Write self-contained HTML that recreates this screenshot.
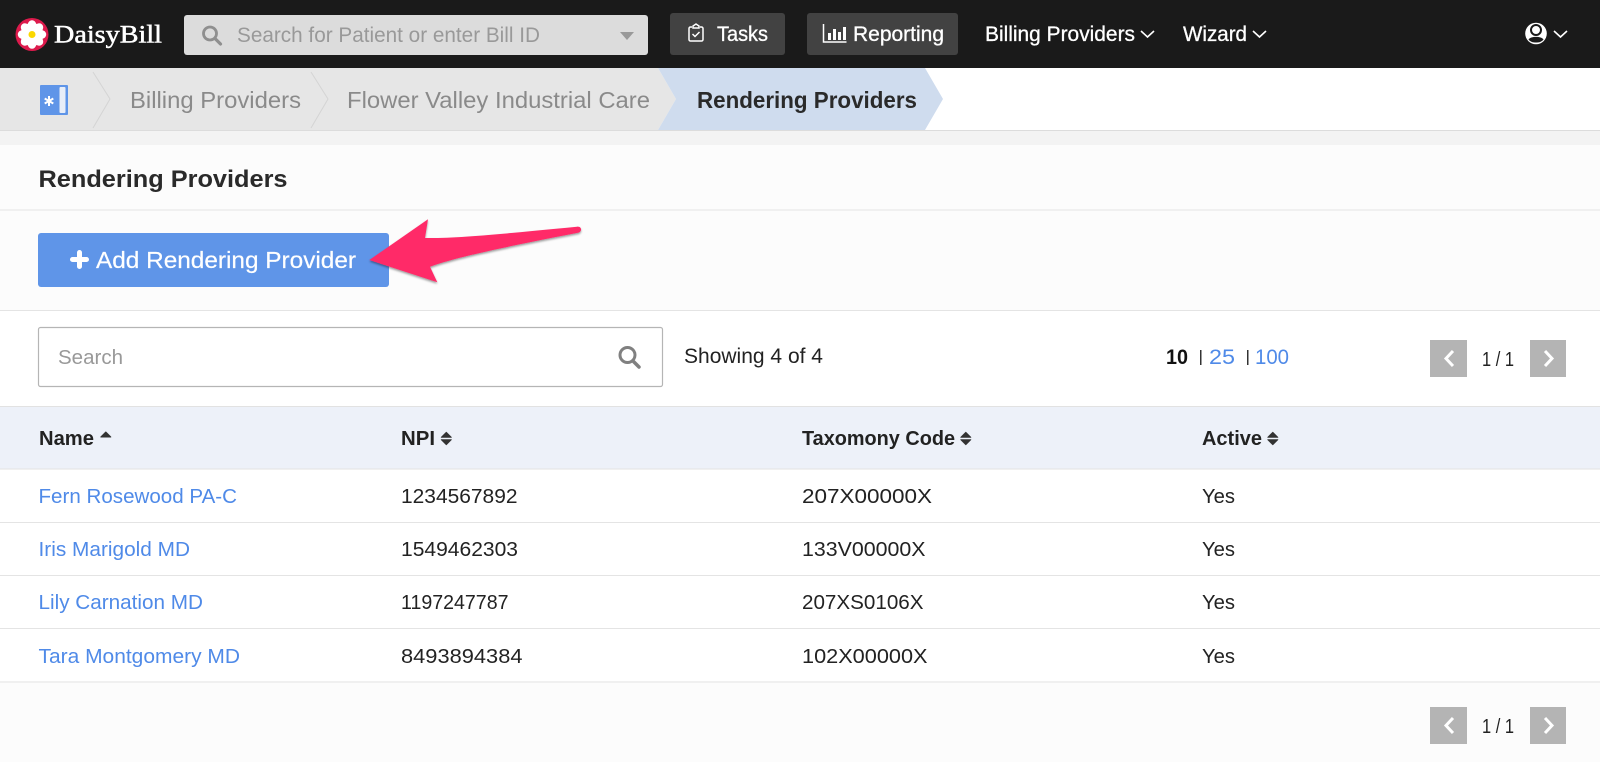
<!DOCTYPE html>
<html><head><meta charset="utf-8"><title>Rendering Providers</title>
<style>
html,body{margin:0;padding:0;width:1600px;height:762px;overflow:hidden;background:#fcfcfc}
svg{display:block}
text{font-family:"Liberation Sans",sans-serif;font-size:20.5px;fill:#222}
.w{fill:#fff}.l{fill:#4f8ae8}.g{fill:#8a8a8a}.b{font-weight:bold}
.n{font-size:21px;stroke:#fff;stroke-width:.3}
.c{font-size:23px}
.s{fill:none;stroke:#fff;stroke-width:1.6}
</style></head><body>
<svg width="1600" height="762" viewBox="0 0 1600 762" xmlns="http://www.w3.org/2000/svg">
<defs>
<filter id="sh" x="-10%" y="-20%" width="120%" height="150%"><feDropShadow dx="0" dy="1.500" stdDeviation="1" flood-color="#000" flood-opacity=".4"/></filter>
<g id="sort"><path d="M.8 5.800 L5.800 .8 L10.800 5.800Z M.8 8.200 L5.800 13.200 L10.800 8.200Z" fill="#333" stroke="#333" stroke-linejoin="round"/></g>
<g id="pg">
<rect x="1430" width="37" height="37" fill="#b4b4b4"/><path d="M1453 11l-7 7.500 7 7.500" fill="none" stroke="#fff" stroke-width="3"/>
<rect x="1530" width="36" height="37" fill="#b4b4b4"/><path d="M1545 11l7 7.500-7 7.500" fill="none" stroke="#fff" stroke-width="3"/>
</g>
</defs>

<rect width="1600" height="762" fill="#fcfcfc"/>
<!-- top nav -->
<rect width="1600" height="68" fill="#1a1a1a"/>
<circle cx="32" cy="34.500" r="16.500" fill="#dd1a4c"/>
<g fill="#fff" transform="translate(32 34.500)">
<ellipse cy="-8.200" rx="4.700" ry="6"/><ellipse cy="-8.200" rx="4.700" ry="6" transform="rotate(45)"/><ellipse cy="-8.200" rx="4.700" ry="6" transform="rotate(90)"/><ellipse cy="-8.200" rx="4.700" ry="6" transform="rotate(135)"/><ellipse cy="-8.200" rx="4.700" ry="6" transform="rotate(180)"/><ellipse cy="-8.200" rx="4.700" ry="6" transform="rotate(225)"/><ellipse cy="-8.200" rx="4.700" ry="6" transform="rotate(270)"/><ellipse cy="-8.200" rx="4.700" ry="6" transform="rotate(315)"/>
</g>
<circle cx="32" cy="34.500" r="3.500" fill="#fbd800"/>
<text x="54" y="42.500" class="w" style="font-family:'Liberation Serif',serif;font-size:25px;stroke:#fff;stroke-width:.5" textLength="108" lengthAdjust="spacingAndGlyphs">DaisyBill</text>

<rect x="184" y="15" width="464" height="40" rx="3" fill="#dcdcdc"/>
<circle cx="210" cy="33.500" r="6.500" fill="none" stroke="#8f8f8f" stroke-width="2.800"/><path d="M215 38.500l5.500 5.500" stroke="#8f8f8f" stroke-width="3.200" stroke-linecap="round"/>
<text x="237" y="42" style="fill:#999;font-size:21px" textLength="303" lengthAdjust="spacingAndGlyphs">Search for Patient or enter Bill ID</text>
<path d="M620 32h14l-7 8z" fill="#999"/>

<rect x="670" y="13" width="115" height="42" rx="3" fill="#424242"/>
<path d="M692 27h-1.500a1.500 1.500 0 0 0-1.500 1.500v11a1.500 1.500 0 0 0 1.500 1.500h11a1.500 1.500 0 0 0 1.500-1.500v-11a1.500 1.500 0 0 0-1.500-1.500h-1.500M693 28v-2l3-2 3 2v2z" fill="none" stroke="#fff" stroke-width="1.500"/>
<path d="M692.500 34l2.500 2.500 4.500-4.500" fill="none" stroke="#fff" stroke-width="1.500"/>
<text x="717" y="41" class="w n" textLength="51" lengthAdjust="spacingAndGlyphs">Tasks</text>

<rect x="807" y="13" width="151" height="42" rx="3" fill="#424242"/>
<path d="M823.500 24v18h23" fill="none" stroke="#fff" stroke-width="1.500"/>
<path d="M828 33h3v7h-3zM833 29h3v11h-3zM838 32h3v8h-3zM843 27h3v13h-3z" fill="#fff"/>
<text x="853" y="41" class="w n" textLength="91" lengthAdjust="spacingAndGlyphs">Reporting</text>

<text x="985" y="41" class="w n" textLength="150" lengthAdjust="spacingAndGlyphs">Billing Providers</text>
<path class="s" d="M1141 31l6.500 6 6.500-6"/>
<text x="1183" y="41" class="w n" textLength="64" lengthAdjust="spacingAndGlyphs">Wizard</text>
<path class="s" d="M1253 31l6.500 6 6.500-6"/>
<circle cx="1536" cy="33.500" r="10.800" fill="#fff"/>
<circle cx="1536" cy="30" r="5" fill="#fff" stroke="#1a1a1a" stroke-width="2"/>
<path d="M1528.500 39.500c2-3.500 13-3.500 15 0-2 2.500-4.500 3-7.500 3s-5.500-.5-7.500-3z" fill="#1a1a1a"/>
<path class="s" d="M1554 31l6.500 6 6.500-6"/>

<!-- breadcrumb -->
<rect y="68" width="1600" height="62" fill="#fff"/>
<path d="M0 68H658L676 99 658 130H0Z" fill="#e6e6e6"/>
<rect y="130" width="1600" height="15" fill="#f3f3f3"/>
<rect y="130" width="1600" height="1" fill="#dcdcdc"/>
<path d="M658 68H925L943 99 925 130H658L676 99Z" fill="#cfdcee"/>
<path d="M93 72L110 99 93 128M311 72L328 99 311 128" fill="none" stroke="#d4d4d4" stroke-width="1"/>
<rect x="40" y="85" width="28" height="30" rx="1" fill="#5f95e8"/>
<rect x="59.500" y="87" width="6" height="26" rx="1" fill="#e8eef8"/>
<path d="M49 96v10M44.700 98.500l8.600 5M44.700 103.500l8.600-5" stroke="#fff" stroke-width="2"/>
<text x="130" y="108" class="g c" textLength="171" lengthAdjust="spacingAndGlyphs">Billing Providers</text>
<text x="347" y="108" class="g c" textLength="303" lengthAdjust="spacingAndGlyphs">Flower Valley Industrial Care</text>
<text x="697" y="108" class="c b" style="fill:#2a2a2a" textLength="220" lengthAdjust="spacingAndGlyphs">Rendering Providers</text>

<!-- heading -->
<text x="38.500" y="187" class="b" style="font-size:24px;fill:#2a2a2a" textLength="249" lengthAdjust="spacingAndGlyphs">Rendering Providers</text>
<rect y="209.500" width="1600" height="1" fill="#e4e4e4"/>

<!-- add button -->
<rect x="38" y="233" width="351" height="54" rx="3" fill="#5f95e8"/>
<path d="M79.500 252.500v14M72.500 259.500h14" fill="none" stroke="#fff" stroke-width="5" stroke-linecap="round"/>
<text x="96" y="268" class="w" style="font-size:23.500px;stroke:#fff;stroke-width:.2" textLength="260" lengthAdjust="spacingAndGlyphs">Add Rendering Provider</text>
<path filter="url(#sh)" d="M425 238C460 238.500 510 233 577 226.700 582 226 582.500 232 578 232.800 510 246 460 256 430 266.700L437.300 282.300 369.300 260 428 219.300Z" fill="#ff2a68"/>

<!-- search row -->
<rect y="310" width="1600" height="96" fill="#fff"/>
<rect y="310" width="1600" height="1" fill="#e4e4e4"/>
<rect x="38.500" y="327.500" width="624" height="59" rx="2" fill="#fff" stroke="#b5b5b5" stroke-width="1.200"/>
<text x="58" y="364" style="fill:#999" textLength="65" lengthAdjust="spacingAndGlyphs">Search</text>
<circle cx="627.500" cy="355" r="7.500" fill="none" stroke="#808080" stroke-width="3"/><path d="M633 361l6 6" stroke="#808080" stroke-width="3.500" stroke-linecap="round"/>
<text x="684" y="363" style="font-size:21px" textLength="139" lengthAdjust="spacingAndGlyphs">Showing 4 of 4</text>
<text x="1166" y="364" class="b" style="fill:#111;font-size:21px" textLength="22" lengthAdjust="spacingAndGlyphs">10</text>
<rect x="1200" y="350" width="1.500" height="15" fill="#333"/>
<text x="1209" y="364" class="l" style="font-size:21px" textLength="26" lengthAdjust="spacingAndGlyphs">25</text>
<rect x="1247" y="350" width="1.500" height="15" fill="#333"/>
<text x="1255" y="364" class="l" style="font-size:21px" textLength="34" lengthAdjust="spacingAndGlyphs">100</text>
<use href="#pg" y="340"/>
<text x="1482" y="366" textLength="32" lengthAdjust="spacingAndGlyphs">1 / 1</text>

<!-- table -->
<rect y="406" width="1600" height="63" fill="#edf1f9"/>
<rect y="406" width="1600" height="1" fill="#e2e2e2"/>
<rect y="469" width="1600" height="212" fill="#fff"/>
<rect y="468.500" width="1600" height="1" fill="#e2e2e2"/>
<rect y="522" width="1600" height="1" fill="#e4e4e4"/>
<rect y="575" width="1600" height="1" fill="#e4e4e4"/>
<rect y="628" width="1600" height="1" fill="#e4e4e4"/>
<rect y="681.500" width="1600" height="1" fill="#e4e4e4"/>

<text x="39" y="445" class="b" textLength="55" lengthAdjust="spacingAndGlyphs">Name</text>
<path d="M100.800 437l5-5 5 5z" fill="#333" stroke="#333" stroke-linejoin="round"/>
<text x="401" y="445" class="b" textLength="34" lengthAdjust="spacingAndGlyphs">NPI</text>
<use href="#sort" x="440.500" y="431.500"/>
<text x="802" y="445" class="b" textLength="153" lengthAdjust="spacingAndGlyphs">Taxomony Code</text>
<use href="#sort" x="960" y="431.500"/>
<text x="1202" y="445" class="b" textLength="60" lengthAdjust="spacingAndGlyphs">Active</text>
<use href="#sort" x="1267" y="431.500"/>

<text x="38.500" y="503" class="l" textLength="198.500" lengthAdjust="spacingAndGlyphs">Fern Rosewood PA-C</text>
<text x="401" y="503" textLength="116.500" lengthAdjust="spacingAndGlyphs">1234567892</text>
<text x="802" y="503" textLength="130" lengthAdjust="spacingAndGlyphs">207X00000X</text>
<text x="1202" y="503" textLength="33" lengthAdjust="spacingAndGlyphs">Yes</text>

<text x="38.500" y="556" class="l" textLength="151.500" lengthAdjust="spacingAndGlyphs">Iris Marigold MD</text>
<text x="401" y="556" textLength="117" lengthAdjust="spacingAndGlyphs">1549462303</text>
<text x="802" y="556" textLength="123.500" lengthAdjust="spacingAndGlyphs">133V00000X</text>
<text x="1202" y="556" textLength="33" lengthAdjust="spacingAndGlyphs">Yes</text>

<text x="38.500" y="609" class="l" textLength="164.500" lengthAdjust="spacingAndGlyphs">Lily Carnation MD</text>
<text x="401" y="609" textLength="107.500" lengthAdjust="spacingAndGlyphs">1197247787</text>
<text x="802" y="609" textLength="121.500" lengthAdjust="spacingAndGlyphs">207XS0106X</text>
<text x="1202" y="609" textLength="33" lengthAdjust="spacingAndGlyphs">Yes</text>

<text x="38.500" y="663" class="l" textLength="201.500" lengthAdjust="spacingAndGlyphs">Tara Montgomery MD</text>
<text x="401" y="663" textLength="121.500" lengthAdjust="spacingAndGlyphs">8493894384</text>
<text x="802" y="663" textLength="125.500" lengthAdjust="spacingAndGlyphs">102X00000X</text>
<text x="1202" y="663" textLength="33" lengthAdjust="spacingAndGlyphs">Yes</text>

<!-- bottom pager -->
<use href="#pg" y="707"/>
<text x="1482" y="733" textLength="32" lengthAdjust="spacingAndGlyphs">1 / 1</text>
</svg>
</body></html>
